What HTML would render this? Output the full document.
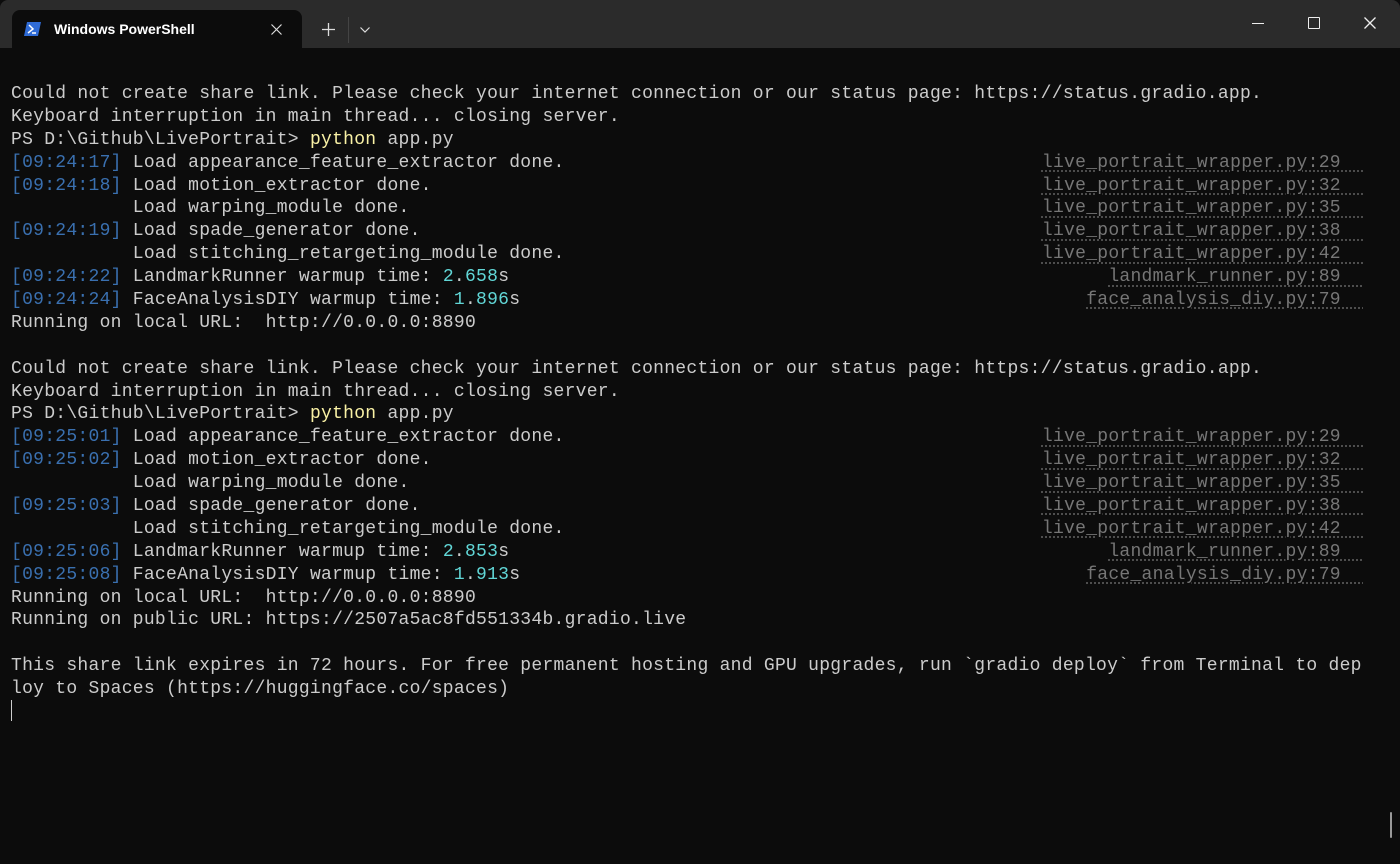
<!DOCTYPE html>
<html><head><meta charset="utf-8"><style>
html,body{margin:0;padding:0;background:#0c0c0c;width:1400px;height:864px;overflow:hidden}
.top{position:absolute;left:0;top:0;width:1400px;height:48px;background:#2b2b2b;border-radius:8px 8px 0 0}
.tab{position:absolute;left:12px;top:10px;width:290px;height:38px;background:#0c0c0c;border-radius:8px 8px 0 0}
.tab .t{position:absolute;left:42px;top:11px;font:600 14px "Liberation Sans",sans-serif;color:#fff}
.term{position:absolute;left:11px;top:83px;width:1352px;font:18px/22.9px "Liberation Mono",monospace;letter-spacing:0.27px;color:#cccccc}
.l{position:relative;height:22.9px;white-space:pre}
.b{color:#3a70b0}.c{color:#61d6d6}.y{color:#f9f1a5}
.f{position:absolute;right:0;top:0;color:#767676;text-decoration:underline dotted #555;text-underline-offset:4px}
.cur{position:absolute;left:11px;top:700px;width:1px;height:21px;background:#ccc}
.sb{position:absolute;left:1390px;top:812px;width:2px;height:26px;background:#999;border-radius:1px}
</style></head><body>
<div class="top">
 <div class="tab">
  <svg style="position:absolute;left:12px;top:11px" width="17" height="16" viewBox="0 0 17 16"><path d="M3 1H17L14 15H0Z" fill="#2f6bd6"/><path d="M5 4L9 8L4 12" stroke="#fff" stroke-width="1.5" fill="none"/><path d="M8 12H12" stroke="#fff" stroke-width="1.5"/></svg>
  <div class="t">Windows PowerShell</div>
  <svg style="position:absolute;left:259px;top:14px" width="11" height="11"><path d="M0.5 0.5L10.5 10.5M10.5 0.5L0.5 10.5" stroke="#ddd" stroke-width="1.2"/></svg>
 </div>
 <svg style="position:absolute;left:322px;top:23px" width="13" height="13"><path d="M6.5 0V13M0 6.5H13" stroke="#ddd" stroke-width="1.3"/></svg>
 <div style="position:absolute;left:348px;top:17px;width:1px;height:26px;background:#444"></div>
 <svg style="position:absolute;left:360px;top:27px" width="10" height="6"><path d="M0.5 0.5L5 5L9.5 0.5" stroke="#ddd" stroke-width="1.2" fill="none"/></svg>
 <div style="position:absolute;left:1252px;top:23px;width:12px;height:1.3px;background:#eee"></div>
 <div style="position:absolute;left:1308px;top:17px;width:10px;height:10px;border:1.3px solid #eee;border-radius:1px"></div>
 <svg style="position:absolute;left:1364px;top:17px" width="12" height="12"><path d="M0.5 0.5L11.5 11.5M11.5 0.5L0.5 11.5" stroke="#eee" stroke-width="1.3"/></svg>
</div>
<div class="term"><div class="l">Could not create share link. Please check your internet connection or our status page: https://status.gradio.app.</div><div class="l">Keyboard interruption in main thread... closing server.</div><div class="l">PS D:\Github\LivePortrait&gt; <span class="y">python</span> app.py</div><div class="l"><span class="b">[09:24:17]</span> Load appearance_feature_extractor done.<span class="f">live_portrait_wrapper.py:29  </span></div><div class="l"><span class="b">[09:24:18]</span> Load motion_extractor done.<span class="f">live_portrait_wrapper.py:32  </span></div><div class="l">           Load warping_module done.<span class="f">live_portrait_wrapper.py:35  </span></div><div class="l"><span class="b">[09:24:19]</span> Load spade_generator done.<span class="f">live_portrait_wrapper.py:38  </span></div><div class="l">           Load stitching_retargeting_module done.<span class="f">live_portrait_wrapper.py:42  </span></div><div class="l"><span class="b">[09:24:22]</span> LandmarkRunner warmup time: <span class="c">2</span>.<span class="c">658</span>s<span class="f">landmark_runner.py:89  </span></div><div class="l"><span class="b">[09:24:24]</span> FaceAnalysisDIY warmup time: <span class="c">1</span>.<span class="c">896</span>s<span class="f">face_analysis_diy.py:79  </span></div><div class="l">Running on local URL:  http://0.0.0.0:8890</div><div class="l"> </div><div class="l">Could not create share link. Please check your internet connection or our status page: https://status.gradio.app.</div><div class="l">Keyboard interruption in main thread... closing server.</div><div class="l">PS D:\Github\LivePortrait&gt; <span class="y">python</span> app.py</div><div class="l"><span class="b">[09:25:01]</span> Load appearance_feature_extractor done.<span class="f">live_portrait_wrapper.py:29  </span></div><div class="l"><span class="b">[09:25:02]</span> Load motion_extractor done.<span class="f">live_portrait_wrapper.py:32  </span></div><div class="l">           Load warping_module done.<span class="f">live_portrait_wrapper.py:35  </span></div><div class="l"><span class="b">[09:25:03]</span> Load spade_generator done.<span class="f">live_portrait_wrapper.py:38  </span></div><div class="l">           Load stitching_retargeting_module done.<span class="f">live_portrait_wrapper.py:42  </span></div><div class="l"><span class="b">[09:25:06]</span> LandmarkRunner warmup time: <span class="c">2</span>.<span class="c">853</span>s<span class="f">landmark_runner.py:89  </span></div><div class="l"><span class="b">[09:25:08]</span> FaceAnalysisDIY warmup time: <span class="c">1</span>.<span class="c">913</span>s<span class="f">face_analysis_diy.py:79  </span></div><div class="l">Running on local URL:  http://0.0.0.0:8890</div><div class="l">Running on public URL: https://2507a5ac8fd551334b.gradio.live</div><div class="l"> </div><div class="l">This share link expires in 72 hours. For free permanent hosting and GPU upgrades, run `gradio deploy` from Terminal to dep</div><div class="l">loy to Spaces (https://huggingface.co/spaces)</div></div>
<div class="cur"></div>
<div class="sb"></div>
</body></html>
